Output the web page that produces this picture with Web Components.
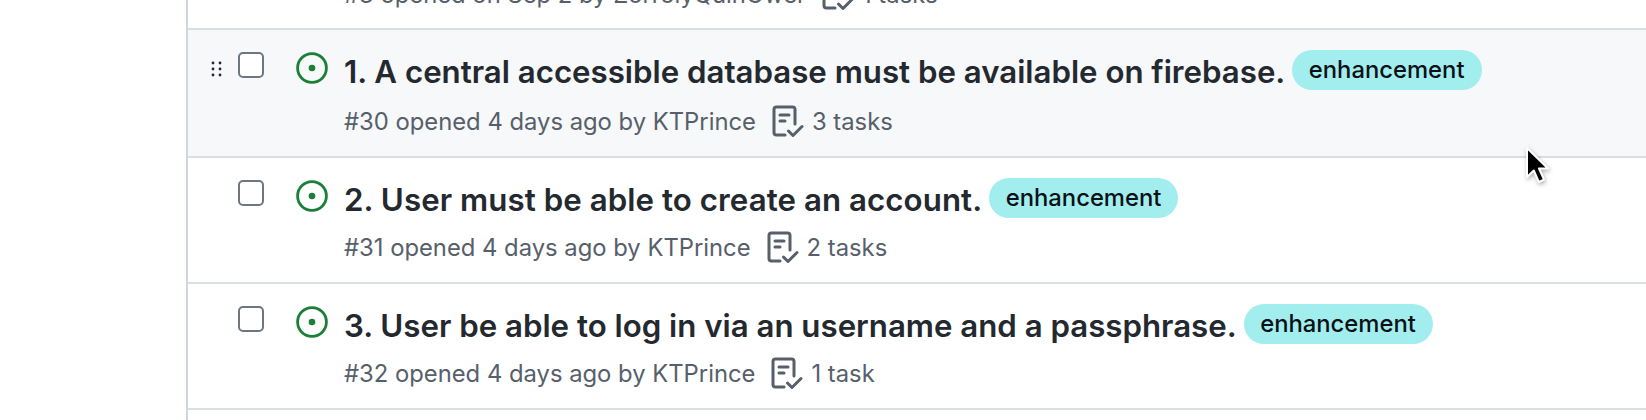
<!DOCTYPE html>
<html><head><meta charset="utf-8"><style>
html,body{margin:0;padding:0;background:#fff}
body{width:1646px;height:420px;overflow:hidden;font-family:Inter,"Liberation Sans",sans-serif}
</style></head><body>
<template id="t-list"><style>
:host{display:block;margin-left:186px;border-left:2px solid #d0d7de;height:420px;overflow:hidden}
</style><slot></slot></template>
<template id="t-row"><style>
:host{display:flex;box-sizing:border-box;border-bottom:2px solid #d8dee4;position:relative;color:#57606a;overflow:hidden}
:host([hover]){background:#f6f8fa}
.grip{display:none;position:absolute;left:23px;top:31px;width:11px;height:16px}
:host([hover]) .grip{display:block}
.cb{width:26px;height:26px;box-sizing:border-box;border:2px solid #6e7781;border-radius:5px;background:#fff;margin:22px 0 0 50px;flex:none}
.st{margin:22px 0 0 32px;flex:none;width:32px;height:32px}
.main{margin:0 0 0 16px;padding-top:21px;flex:1}
.title{display:flex;align-items:flex-start;gap:7px;height:40px}
.t{font-size:31.25px;font-weight:600;color:#24292f;line-height:42px;white-space:nowrap;letter-spacing:var(--title-ls,0)}
.meta{display:flex;align-items:center;font-size:23.8px;line-height:32px;margin-top:var(--meta-gap,12px);white-space:nowrap}
.tk{margin-left:16px;display:flex;align-items:center;gap:8px}
.tk svg{width:32px;height:33px;flex:none}
:host([clipped]) .cb,:host([clipped]) .st{visibility:hidden}
:host([clipped]) .title{display:none}
:host([clipped]) .main{padding-top:0;margin-top:-34px}
</style>
<svg class="grip" viewBox="0 0 11 16" fill="#24292f"><circle cx="2" cy="2" r="1.4"/><circle cx="9" cy="2" r="1.4"/><circle cx="2" cy="8" r="1.4"/><circle cx="9" cy="8" r="1.4"/><circle cx="2" cy="14" r="1.4"/><circle cx="9" cy="14" r="1.4"/></svg>
<div class="cb"></div>
<svg class="st" viewBox="0 0 32 32"><circle cx="16" cy="16" r="14.4" fill="none" stroke="#1a7f37" stroke-width="2.8"/><circle cx="16" cy="16" r="3.3" fill="#1a7f37"/></svg>
<div class="main">
<div class="title"><span class="t"><slot name="title"></slot></span><slot name="label"></slot></div>
<div class="meta"><span><slot name="meta"></slot></span><span class="tk"><svg viewBox="0 0 32 33" fill="none" stroke="#57606a" stroke-width="3" stroke-linecap="round" stroke-linejoin="round"><path d="M13 30H4.500A2.500 2.500 0 0 1 2 27.500V4.500A2.500 2.500 0 0 1 4.500 2h16A2.500 2.500 0 0 1 23 4.500V19"/><path d="M8 10h9M8 16h5"/><path d="M16.500 26l4.500 4.500 9-9"/></svg><span><slot name="tasks"></slot></span></span></div>
</div></template>
<template id="t-label"><style>
:host{display:inline-block;margin-top:-1px;background:#a2eeef;color:#0b1116;font-size:23.8px;font-weight:500;line-height:40px;height:40px;padding:0 17px 0 16.500px;border-radius:20px;white-space:nowrap}
</style><slot></slot></template>
<template id="t-cursor"><style>
:host{display:block;position:absolute;left:1525px;top:146px;width:26px;height:40px}
</style><svg width="26" height="40" viewBox="0 0 26 40" style="filter:drop-shadow(1px 2px 2px rgba(0,0,0,.3))"><path d="M2 2v29l6.800-6.500 5 11.500 5.200-2.300-5-11.200H23z" fill="#000" stroke="#fff" stroke-width="2" stroke-linejoin="round"/></svg></template>
<issue-list>
<issue-row clipped style="height:30px"><span slot="meta">#3 opened on Sep 2 by ZorrolyQuinOwer</span><span slot="tasks">1 tasks</span></issue-row>
<issue-row hover style="height:128px;--meta-gap:14px;--title-ls:-0.015px"><span slot="title">1. A central accessible database must be available on firebase.</span><issue-label slot="label">enhancement</issue-label><span slot="meta">#30 opened 4 days ago by KTPrince</span><span slot="tasks">3 tasks</span></issue-row>
<issue-row style="height:126px;--title-ls:0.06px"><span slot="title">2. User must be able to create an account.</span><issue-label slot="label">enhancement</issue-label><span slot="meta">#31 opened 4 days ago by KTPrince</span><span slot="tasks">2 tasks</span></issue-row>
<issue-row style="height:126px;--title-ls:-0.015px"><span slot="title">3. User be able to log in via an username and a passphrase.</span><issue-label slot="label">enhancement</issue-label><span slot="meta">#32 opened 4 days ago by KTPrince</span><span slot="tasks">1 task</span></issue-row>
</issue-list>
<mouse-cursor></mouse-cursor>
<script>
for(const [n,id] of [['issue-list','t-list'],['issue-row','t-row'],['issue-label','t-label'],['mouse-cursor','t-cursor']]){
customElements.define(n,class extends HTMLElement{constructor(){super();this.attachShadow({mode:'open'}).appendChild(document.getElementById(id).content.cloneNode(true));}});
}
</script>
</body></html>
